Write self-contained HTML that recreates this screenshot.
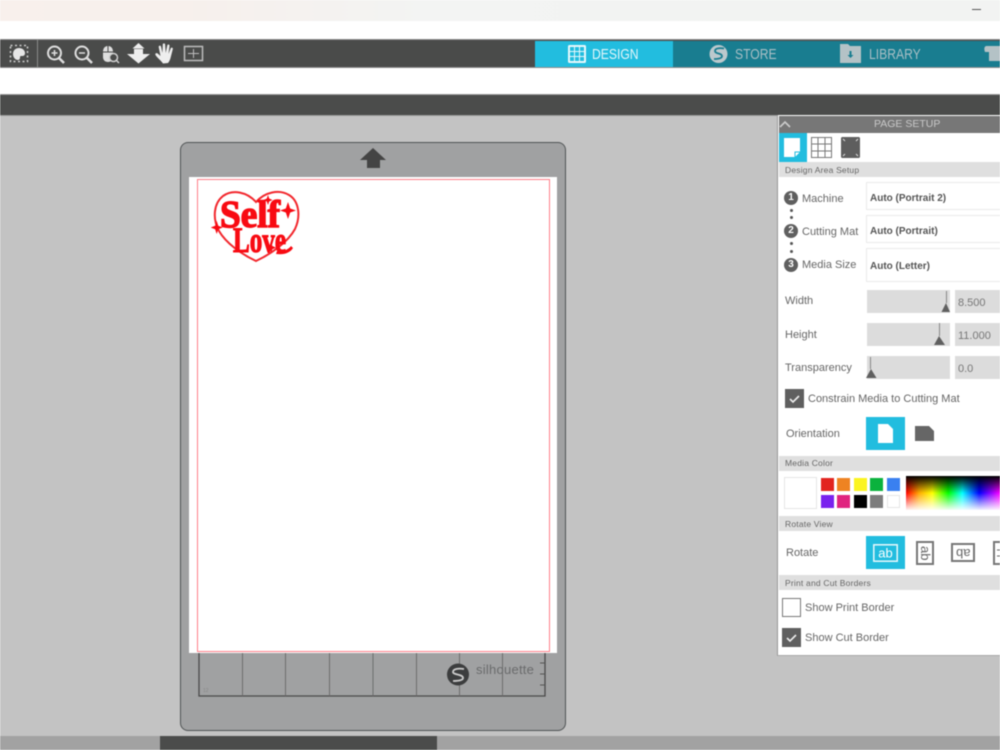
<!DOCTYPE html>
<html><head><meta charset="utf-8">
<style>
html,body{margin:0;padding:0;background:#fff}
#p{position:relative;width:1000px;height:750px;overflow:hidden;background:#fff;font-family:"Liberation Sans",sans-serif;filter:blur(.45px)}
#p div,#p svg,#p span.t{position:absolute}
.t{white-space:nowrap;color:#666;font-size:11px;line-height:14px}
.tab{font-size:15px;line-height:18px;transform:scaleX(.81);transform-origin:0 50%}
.b{font-weight:bold;color:#555;font-size:10px}
.sec{left:779px;width:221px;height:15px;background:#dfdfdf}
.sect{left:785px;font-size:8.5px;color:#666;letter-spacing:.2px}
.sel{left:866px;width:134px;background:#fff;border:1px solid #eaeaea;border-right:0;box-sizing:border-box}
.sl{left:866.500px;width:83px;height:23px;background:#dcdcdc}
.val{left:955px;width:45px;height:23px;background:#dcdcdc}
.n{left:784px;width:14px;height:14px;border-radius:50%;background:#5f5f5f;color:#fff;font-size:10px;line-height:14px;text-align:center;font-weight:bold}
.dot{left:790px;width:3px;height:3px;border-radius:50%;background:#555}
.sw{width:13px;height:13px}
</style></head><body>
<div id="p">
<div style="left:0;top:0;width:1000px;height:21px;background:linear-gradient(90deg,#f8f0ec 0,#f7f0ec 180px,#f3f4f3 420px,#f2f3f2 100%)"></div>
<div style="left:972px;top:9px;width:9px;height:1px;background:#555"></div>

<div style="left:0;top:39px;width:1000px;height:29px;background:#4a4b4a;border-top:1px solid #8c8c8c;border-bottom:1px solid #8c8c8c;box-sizing:border-box"></div>
<div style="left:37px;top:40px;width:1px;height:27px;background:#8a8a8a"></div>
<svg style="left:0;top:40px" width="215" height="28" viewBox="0 0 215 28" fill="none">
<rect x="10.500" y="5.500" width="17" height="16" stroke="#ccc" stroke-width="1.500" stroke-dasharray="2 2.500"/>
<path d="M13 14c0-4 3-6 6-6s6 2 6 5c0 2-1 3-3 3h-1c-1 0-1 1-1 2s-1 2-2 2c-3 0-5-3-5-6z" fill="#e6e6e6"/>
<g stroke="#dedede" stroke-width="2"><circle cx="54.500" cy="13" r="6.500"/><path d="M59 18l5 5" stroke-width="2.500"/><path d="M51.500 13h6M54.500 10v6" stroke-width="1.500"/>
<circle cx="82" cy="13" r="6.500"/><path d="M87 18l5 5" stroke-width="2.500"/><path d="M79 13h6" stroke-width="1.500"/></g>
<path d="M103 12c0-4 2-6 5-6s5 2 5 6v5c0 3-2 5-5 5s-5-2-5-5z" fill="#dedede"/>
<path d="M108 6v6M103 12h10" stroke="#4a4b4a"/>
<circle cx="113.500" cy="17.500" r="4" fill="#4a4b4a" stroke="#cfcfcf" stroke-width="1.500"/><path d="M116.500 20.500l2.500 2.500" stroke="#cfcfcf" stroke-width="1.500"/>
<path d="M138.500 3l6 5.500h-12zM134 9h9v5h7l-11.500 9.500L127 14h7z" fill="#eee"/>
<path d="M163 23.500c-2-3-6-6-7.500-8.500-.8-1.500 1-2.500 2.200-1.500l2.800 2.500-1.800-9c-.2-1.500 1.900-2 2.300-.5l1.500 6.500.3-8.500c0-1.500 2.300-1.500 2.300 0l.6 8.500 1.600-7.500c.3-1.500 2.400-1.200 2.200.4l-1 8 2.200-5.500c.6-1.300 2.500-.8 2.100.7l-2.300 9c-.5 2-1.400 3.500-2.500 4.900z" fill="#eee"/>
<rect x="184.500" y="6.500" width="18" height="14" stroke="#bdbdbd" stroke-width="1.500"/><path d="M193.500 9v9M188 13.500h11" stroke="#bdbdbd"/>
</svg>

<div style="left:535px;top:41px;width:138px;height:26px;background:#22bddf"></div>
<div style="left:673px;top:41px;width:327px;height:26px;background:#197d90"></div>
<svg style="left:567px;top:44px" width="20" height="20" viewBox="0 0 20 20"><rect x="1" y="1" width="18" height="18" rx="1.500" fill="#e8f8fb"/><path d="M3 3h4v4H3zm5 0h4v4H8zm5 0h4v4h-4zM3 8h4v4H3zm5 0h4v4H8zm5 0h4v4h-4zM3 13h4v4H3zm5 0h4v4H8zm5 0h4v4h-4z" fill="#22bddf"/></svg>
<span class="t tab" style="left:592px;top:46px;color:#e4f6fa">DESIGN</span>
<svg style="left:709px;top:45px" width="19" height="18" viewBox="0 0 19 18"><circle cx="9.500" cy="9" r="9" fill="#bcc9cd"/><path d="M15 3.500C10 2.500 6 3.500 6 6c0 3 7 2 7 5 0 2-3 3-8 3" fill="none" stroke="#197d90" stroke-width="1.800"/></svg>
<span class="t tab" style="left:735px;top:46px;color:#a9bfc5">STORE</span>
<svg style="left:840px;top:44px" width="21" height="19" viewBox="0 0 21 19"><path d="M0 0h8l2 2h11v17H0z" fill="#b4c2c6"/><path d="M9.500 7h2v4h2l-3 3-3-3h2z" fill="#197d90"/></svg>
<span class="t tab" style="left:869px;top:46px;color:#a9bfc5">LIBRARY</span>
<svg style="left:984px;top:44px" width="16" height="18" viewBox="0 0 16 18"><path d="M2 2h14v15H5V8H1C0 5 0 3 2 2z" fill="#b4c2c6"/></svg>

<div style="left:0;top:94px;width:1000px;height:22px;background:#4b4c4b;border-top:1px solid #999;border-bottom:1px solid #999;box-sizing:border-box"></div>
<div style="left:0;top:116px;width:1000px;height:620px;background:#c3c3c3"></div>

<div style="left:180px;top:142px;width:386px;height:589px;background:#a0a1a2;border:1.500px solid #505455;border-radius:8px;box-sizing:border-box"></div>
<svg style="left:359px;top:147px" width="28" height="22" viewBox="0 0 28 22"><path d="M14 1l13 12h-6v8H8v-8H1z" fill="#444"/></svg>
<div style="left:189px;top:177px;width:368px;height:476px;background:#fff"></div>
<div style="left:197px;top:179px;width:353px;height:473px;border:1px solid #ff7f88;box-sizing:border-box"></div>
<svg style="left:198px;top:653px" width="350" height="45" viewBox="0 0 350 45" fill="none">
<path d="M1 0v43h346V0" stroke="#4a4a4a" stroke-width="1.300"/>
<path d="M44.500 0v43M87.500 0v43M131.500 0v43M175 0v43M218.500 0v43M261.500 0v43M304.500 0v43" stroke="#6d6d6d"/>
<path d="M342 10h5M342 21h5M342 32h5" stroke="#555"/>
</svg>
<svg style="left:446px;top:663px" width="24" height="23" viewBox="0 0 24 23"><circle cx="12" cy="11.500" r="11" fill="#3c3d3e"/><path d="M18 6C12 5 7 6 7 9c0 3 10 2 10 6 0 2-4 3-10 3" fill="none" stroke="#ccc" stroke-width="1.800"/></svg>
<span class="t" style="left:476px;top:662px;font-size:13px;line-height:16px;color:#6a6b6c;letter-spacing:.25px">silhouette</span>
<span class="t" style="left:203px;top:688px;font-size:5px;line-height:6px;color:#888">12</span>

<svg style="left:211px;top:188px" width="90" height="76" viewBox="0 0 90 76">
<path d="M45 14C36 4 22 1 12 8 3 15 1 30 8 43c7 12 22 23 37 30 15-7 32-19 39-32 6-13 4-28-6-34C68 1 54 4 45 14z" fill="#fff" stroke="#f2282e" stroke-width="2"/>
<text x="9" y="39" font-family="Liberation Serif,serif" font-weight="bold" font-size="38" fill="#f80a12" stroke="#f80a12" stroke-width="1.400" textLength="60" lengthAdjust="spacingAndGlyphs">Self</text>
<text x="22" y="64" font-family="Liberation Serif,serif" font-weight="bold" font-size="36" fill="#f80a12" stroke="#f80a12" stroke-width="1.100" textLength="53" lengthAdjust="spacingAndGlyphs">Love</text>
<path d="M66 63c6 .5 11-1 14-5l2 2c-3 5-9 7-17 6z" fill="#f80a12"/>
<path d="M77 14l2.200 6.500 5.800 2-5.800 2L77 31l-2.200-6.500-5.800-2 5.800-2zM5.700 33l1.600 4.800 4.500 1.700-4.500 1.700L5.700 46l-1.600-4.800-4.500-1.700 4.500-1.700zM57 7l1.200 3.500 3.300 1.500-3.300 1.500L57 17l-1.200-3.500-3.300-1.500 3.300-1.500zM60 54l1.400 4 3.600 1.600-3.600 1.600-1.400 4-1.400-4-3.600-1.600 3.600-1.600z" fill="#f80a12"/>
</svg>

<div style="left:0;top:736px;width:1000px;height:14px;background:#a2a2a2"></div>
<div style="left:160px;top:736px;width:277px;height:14px;background:#4b4c4b"></div>

<!-- panel -->
<div style="left:777px;top:115px;width:223px;height:541px;background:#fff;border-left:1.500px solid #999;border-bottom:1px solid #aaa;box-sizing:border-box"></div>
<div style="left:778.500px;top:116px;width:222px;height:17px;background:#777"></div>
<svg style="left:779px;top:120px" width="12" height="9" viewBox="0 0 12 9"><path d="M1 7l5-5 5 5" fill="none" stroke="#ccc" stroke-width="1.600"/></svg>
<span class="t" style="left:874px;top:117px;font-size:10.500px;color:#c9c9c9;line-height:15px">PAGE SETUP</span>
<div style="left:778.500px;top:133px;width:28px;height:29px;background:#22bddf"></div>
<svg style="left:783px;top:137px" width="18" height="21" viewBox="0 0 18 21"><path d="M1 1h16v14l-5 5H1z" fill="#fff"/><path d="M17 15h-5v5" fill="none" stroke="#22bddf"/></svg>
<svg style="left:811px;top:137px" width="21" height="21" viewBox="0 0 21 21"><path d="M.5.500h20v20H.5zM7 .500v20M14 .500v20M.5 7h20M.5 14h20" fill="none" stroke="#777"/></svg>
<svg style="left:841px;top:137px" width="19" height="21" viewBox="0 0 19 21"><rect width="19" height="21" rx="1.500" fill="#5e5e5e"/><path d="M2 2l2 2M17 2l-2 2M2 19l2-2M17 19l-2-2" stroke="#ddd"/></svg>

<div class="sec" style="top:162px"></div><span class="t sect" style="top:163px">Design Area Setup</span>
<div class="n" style="top:191px">1</div><div class="n" style="top:224px">2</div><div class="n" style="top:258px">3</div>
<div class="dot" style="top:209px"></div><div class="dot" style="top:216px"></div>
<div class="dot" style="top:242px"></div><div class="dot" style="top:250px"></div>
<span class="t" style="left:802px;top:192px">Machine</span>
<span class="t" style="left:802px;top:225px">Cutting Mat</span>
<span class="t" style="left:802px;top:258px">Media Size</span>
<div class="sel" style="top:182px;height:28px"></div>
<div class="sel" style="top:215px;height:28px"></div>
<div class="sel" style="top:248px;height:34px"></div>
<span class="t b" style="left:870px;top:192px">Auto (Portrait 2)</span>
<span class="t b" style="left:870px;top:225px">Auto (Portrait)</span>
<span class="t b" style="left:870px;top:260px">Auto (Letter)</span>

<span class="t" style="left:785px;top:294px">Width</span>
<span class="t" style="left:785px;top:328px">Height</span>
<span class="t" style="left:785px;top:361px">Transparency</span>
<div class="sl" style="top:290px"></div><div class="sl" style="top:323px"></div><div class="sl" style="top:356px"></div>
<div class="val" style="top:290px"></div><div class="val" style="top:323px"></div><div class="val" style="top:356px"></div>
<span class="t" style="left:958px;top:296px;font-size:11px;color:#777">8.500</span>
<span class="t" style="left:958px;top:329px;font-size:11px;color:#777">11.000</span>
<span class="t" style="left:958px;top:362px;font-size:11px;color:#777">0.0</span>
<svg style="left:866px;top:290px" width="84" height="90" viewBox="0 0 84 90"><g fill="#5f5f5f"><path d="M75.500 22l4.500-9 4 9z"/><path d="M68 55l5-9 6 9z"/><path d="M0 88l5-9 5.500 9z"/></g><path d="M80.500 1v12M73.500 33v13M4.500 67v12" stroke="#888"/></svg>

<div style="left:785px;top:389px;width:19px;height:19px;background:#5f5f5f"></div>
<svg style="left:785px;top:389px" width="19" height="19" viewBox="0 0 19 19"><path d="M5 10l3 3 6-6" fill="none" stroke="#eee" stroke-width="1.600"/></svg>
<span class="t" style="left:808px;top:392px">Constrain Media to Cutting Mat</span>
<span class="t" style="left:786px;top:427px">Orientation</span>
<div style="left:866px;top:417px;width:39px;height:33px;background:#22bddf"></div>
<svg style="left:878px;top:424px" width="15" height="19" viewBox="0 0 15 19"><path d="M0 0h10l5 5v14H0z" fill="#fff"/></svg>
<svg style="left:915px;top:426px" width="19" height="15" viewBox="0 0 19 15"><path d="M0 0h14l5 5v10H0z" fill="#666"/></svg>

<div class="sec" style="top:456px"></div><span class="t sect" style="top:456px">Media Color</span>
<div style="left:784px;top:477px;width:33px;height:32px;background:#fff;border:1px solid #e5e5e5;box-sizing:border-box"></div>
<div class="sw" style="left:821px;top:478px;background:#e2241f"></div>
<div class="sw" style="left:837px;top:478px;background:#ee8322"></div>
<div class="sw" style="left:854px;top:478px;background:#fbf41f"></div>
<div class="sw" style="left:870px;top:478px;background:#0bb23d"></div>
<div class="sw" style="left:887px;top:478px;background:#3a80f0"></div>
<div class="sw" style="left:821px;top:495px;background:#7a22ee"></div>
<div class="sw" style="left:837px;top:495px;background:#e0247f"></div>
<div class="sw" style="left:854px;top:495px;background:#000"></div>
<div class="sw" style="left:870px;top:495px;background:#7d7d7d"></div>
<div class="sw" style="left:887px;top:495px;background:#fff;border:1px solid #e5e5e5;box-sizing:border-box"></div>
<div style="left:906px;top:476px;width:94px;height:34px;background:linear-gradient(180deg,rgba(0,0,0,1) 0,rgba(0,0,0,0) 50%,rgba(255,255,255,0) 50%,rgba(255,255,255,.95) 100%),linear-gradient(90deg,#f00 0,#fa0 14%,#ff0 28%,#0f0 45%,#0ff 60%,#00f 78%,#f0f 100%)"></div>

<div class="sec" style="top:516px"></div><span class="t sect" style="top:517px">Rotate View</span>
<span class="t" style="left:786px;top:546px">Rotate</span>
<div style="left:866px;top:536px;width:39px;height:33px;background:#22bddf"></div>
<svg style="left:873px;top:544px" width="25" height="18" viewBox="0 0 25 18"><rect x=".8" y=".8" width="23.400" height="16.400" fill="none" stroke="#e8f8fb" stroke-width="1.500"/><text x="12.500" y="13.500" text-anchor="middle" font-family="Liberation Sans,sans-serif" font-size="13" fill="#fff">ab</text></svg>
<svg style="left:916px;top:541px" width="18" height="24" viewBox="0 0 18 24"><rect x="1" y="1" width="16" height="22" fill="none" stroke="#777" stroke-width="2"/><text transform="translate(5 5) rotate(90)" font-family="Liberation Sans,sans-serif" font-size="13" fill="#666">ab</text></svg>
<svg style="left:951px;top:543px" width="24" height="19" viewBox="0 0 24 19"><rect x="1" y="1" width="22" height="17" fill="none" stroke="#777" stroke-width="2"/><text transform="translate(19.500 6) rotate(180)" font-family="Liberation Sans,sans-serif" font-size="13" fill="#666">ab</text></svg>
<svg style="left:993px;top:541px" width="7" height="24" viewBox="0 0 7 24"><path d="M7 1H1v22h6" fill="none" stroke="#777" stroke-width="2"/><path d="M4 9h3M4 15h3" stroke="#666"/></svg>

<div class="sec" style="top:575px"></div><span class="t sect" style="top:576px">Print and Cut Borders</span>
<div style="left:782px;top:598px;width:19px;height:19px;background:#fff;border:1px solid #777;box-sizing:border-box"></div>
<span class="t" style="left:805px;top:601px">Show Print Border</span>
<div style="left:782px;top:628px;width:19px;height:19px;background:#5f5f5f"></div>
<svg style="left:782px;top:628px" width="19" height="19" viewBox="0 0 19 19"><path d="M5 10l3 3 6-6" fill="none" stroke="#eee" stroke-width="1.600"/></svg>
<span class="t" style="left:805px;top:631px">Show Cut Border</span>
</div>
</body></html>
